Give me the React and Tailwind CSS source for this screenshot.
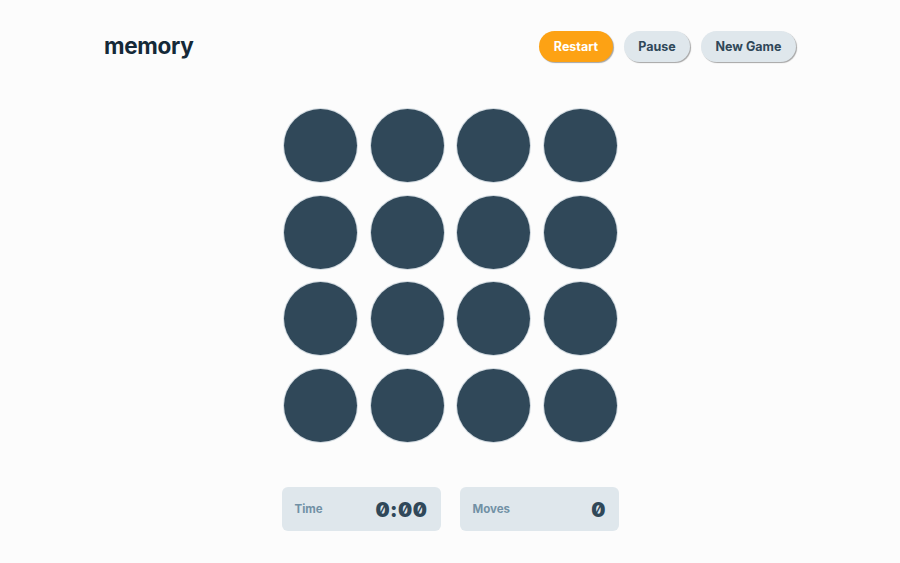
export default function App() {
  const tiles = Array.from({ length: 16 }, (_, i) => i);
  return (
    <div className="min-h-[563px] w-full bg-[#fcfcfc] font-['Inter',sans-serif] text-[#304859]">
      <div className="mx-auto w-[692px] pt-[31px]">
        <header className="flex items-center justify-between">
          <h1 className="-mt-[1px] text-[22.5px] font-bold leading-none tracking-[-0.3px] text-[#152938]">memory</h1>
          <div className="flex items-center gap-[11px]">
            <button className="h-[31px] w-[74px] rounded-full bg-[#fda214] pt-[2px] text-[12.5px] font-bold text-white shadow-[1px_1px_1px_rgba(0,0,0,0.35)]">
              Restart
            </button>
            <button className="h-[31px] w-[66px] rounded-full bg-[#dfe7ec] pt-[2px] text-[12.5px] font-bold text-[#304859] shadow-[1px_1px_1px_rgba(0,0,0,0.35)]">
              Pause
            </button>
            <button className="h-[31px] w-[95px] rounded-full bg-[#dfe7ec] pt-[2px] text-[12.5px] font-bold text-[#304859] shadow-[1px_1px_1px_rgba(0,0,0,0.35)]">
              New Game
            </button>
          </div>
        </header>

        <main className="mt-[47px] flex flex-col items-center">
          <div className="ml-[1px] grid grid-cols-4 gap-x-[13.5px] gap-y-[13.5px]">
            {tiles.map((i) => (
              <div
                key={i}
                className="h-[73px] w-[73px] rounded-full bg-[#304859] shadow-[0_0_0_1px_#d3dbe1]"
              />
            ))}
          </div>

          <div className="mt-[45px] flex gap-[19px]">
            <div className="flex h-[44px] w-[159px] items-center justify-between rounded-[6px] bg-[#dfe7ec] px-[13px] pt-[3px]">
              <span className="text-[11.5px] font-bold text-[#7191a5]">Time</span>
              <span className="slashed-zero text-[20px] font-black tracking-[0.5px] text-[#304859]">0:00</span>
            </div>
            <div className="flex h-[44px] w-[159px] items-center justify-between rounded-[6px] bg-[#dfe7ec] px-[13px] pt-[3px]">
              <span className="text-[11.5px] font-bold text-[#7191a5]">Moves</span>
              <span className="slashed-zero text-[20px] font-black text-[#304859]">0</span>
            </div>
          </div>
        </main>
      </div>
    </div>
  );
}
